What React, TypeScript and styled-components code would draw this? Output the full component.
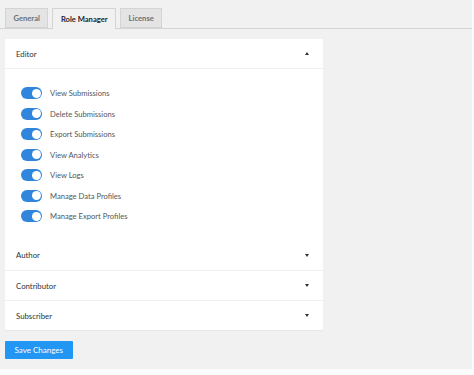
import React from "react";
import styled, { createGlobalStyle } from "styled-components";

const Global = createGlobalStyle`
  html, body { margin: 0; padding: 0; background: #fbfbfb; }
  body { font-family: Lato, "Noto Sans", sans-serif; }
  * { box-sizing: border-box; }
`;

const Page = styled.div`
  width: 472px;
  height: 369px;
  background: #f1f1f1;
  padding-top: 8px;
`;

const TabBar = styled.div`
  display: flex;
  gap: 4px;
  padding-left: 5px;
  border-bottom: 1px solid #d4d4d4;
  height: 21px;
`;

const Tab = styled.div<{ $active?: boolean }>`
  height: ${(p) => (p.$active ? "21px" : "20px")};
  padding: 0 7.5px;
  display: flex;
  align-items: center;
  font-size: 7.6px;
  font-weight: 700;
  color: ${(p) => (p.$active ? "#1d2327" : "#6b7075")};
  background: ${(p) => (p.$active ? "#f1f1f1" : "#e4e4e4")};
  border: 1px solid #d4d4d4;
  border-bottom: ${(p) => (p.$active ? "none" : "1px solid #d4d4d4")};
`;

const Content = styled.div`
  padding: 10px 5px 0;
`;

const Card = styled.div`
  width: 318px;
  background: #fff;
  box-shadow: 0 1px 1px rgba(0, 0, 0, 0.04);
`;

const Header = styled.div<{ $open?: boolean; $sep?: boolean }>`
  height: 30px;
  display: flex;
  align-items: center;
  justify-content: space-between;
  padding: 0 14px 0 11px;
  font-size: 7.8px;
  color: #2c3338;
  border-top: ${(p) => (p.$sep ? "1px solid #f0f0f0" : "none")};
  border-bottom: ${(p) => (p.$open ? "1px solid #f0f0f0" : "none")};
`;

const Arrow = styled.span<{ $up?: boolean }>`
  width: 0;
  height: 0;
  border-left: 2.5px solid transparent;
  border-right: 2.5px solid transparent;
  ${(p) =>
    p.$up
      ? "border-bottom: 3.5px solid #2c3338;"
      : "border-top: 3.5px solid #2c3338;"}
`;

const Body = styled.div`
  padding: 18px 16px 18px;
  display: flex;
  flex-direction: column;
  gap: 8.5px;
`;

const Row = styled.div`
  display: flex;
  align-items: center;
  gap: 8px;
  height: 12px;
`;

const Toggle = styled.span`
  position: relative;
  width: 21px;
  height: 12px;
  border-radius: 6px;
  background: #2f86dc;
  &::after {
    content: "";
    position: absolute;
    right: 1.5px;
    top: 1.5px;
    width: 9px;
    height: 9px;
    border-radius: 50%;
    background: #fff;
  }
`;

const Label = styled.span`
  font-size: 7.6px;
  color: #50575e;
`;

const Button = styled.button`
  margin-top: 11px;
  height: 18px;
  padding: 0 9.5px;
  border: none;
  border-radius: 1px;
  background: #2196f3;
  color: #fff;
  font-family: inherit;
  font-size: 8px;
`;

const perms = [
  "View Submissions",
  "Delete Submissions",
  "Export Submissions",
  "View Analytics",
  "View Logs",
  "Manage Data Profiles",
  "Manage Export Profiles",
];

export default function App() {
  return (
    <>
      <Global />
      <Page>
        <TabBar>
          <Tab>General</Tab>
          <Tab $active>Role Manager</Tab>
          <Tab>License</Tab>
        </TabBar>
        <Content>
          <Card>
            <Header $open>
              <span>Editor</span>
              <Arrow $up />
            </Header>
            <Body>
              {perms.map((p) => (
                <Row key={p}>
                  <Toggle />
                  <Label>{p}</Label>
                </Row>
              ))}
            </Body>
            {["Author", "Contributor", "Subscriber"].map((r, i) => (
              <Header key={r} $sep={i > 0}>
                <span>{r}</span>
                <Arrow />
              </Header>
            ))}
          </Card>
          <Button>Save Changes</Button>
        </Content>
      </Page>
    </>
  );
}
